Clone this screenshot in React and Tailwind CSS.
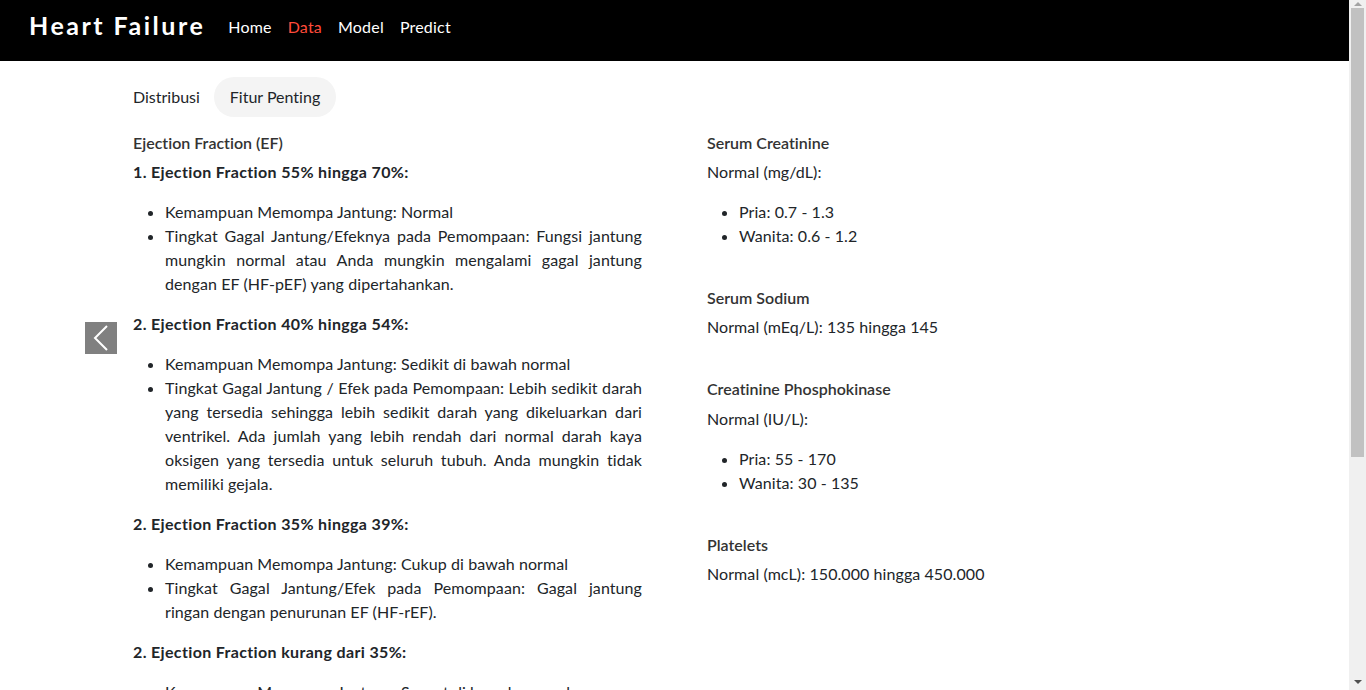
import React, { useState } from 'react';

const font = { fontFamily: 'Lato, "Noto Sans", sans-serif' };

const efSections = [
  {
    title: '1. Ejection Fraction 55% hingga 70%:',
    items: [
      'Kemampuan Memompa Jantung: Normal',
      'Tingkat Gagal Jantung/Efeknya pada Pemompaan: Fungsi jantung mungkin normal atau Anda mungkin mengalami gagal jantung dengan EF (HF-pEF) yang dipertahankan.',
    ],
  },
  {
    title: '2. Ejection Fraction 40% hingga 54%:',
    items: [
      'Kemampuan Memompa Jantung: Sedikit di bawah normal',
      'Tingkat Gagal Jantung / Efek pada Pemompaan: Lebih sedikit darah yang tersedia sehingga lebih sedikit darah yang dikeluarkan dari ventrikel. Ada jumlah yang lebih rendah dari normal darah kaya oksigen yang tersedia untuk seluruh tubuh. Anda mungkin tidak memiliki gejala.',
    ],
  },
  {
    title: '2. Ejection Fraction 35% hingga 39%:',
    items: [
      'Kemampuan Memompa Jantung: Cukup di bawah normal',
      'Tingkat Gagal Jantung/Efek pada Pemompaan: Gagal jantung ringan dengan penurunan EF (HF-rEF).',
    ],
  },
  {
    title: '2. Ejection Fraction kurang dari 35%:',
    items: [
      'Kemampuan Memompa Jantung: Sangat di bawah normal',
      'Tingkat Gagal Jantung/Efek pada Pemompaan: Gagal jantung sedang hingga berat dengan penurunan EF (HF-rEF).',
    ],
  },
];

const labs = [
  { title: 'Serum Creatinine', text: 'Normal (mg/dL):', items: ['Pria: 0.7 - 1.3', 'Wanita: 0.6 - 1.2'] },
  { title: 'Serum Sodium', text: 'Normal (mEq/L): 135 hingga 145' },
  { title: 'Creatinine Phosphokinase', text: 'Normal (IU/L):', items: ['Pria: 55 - 170', 'Wanita: 30 - 135'] },
  { title: 'Platelets', text: 'Normal (mcL): 150.000 hingga 450.000' },
];

const Navbar = () => (
  <nav className="h-[61px] bg-black flex items-center px-[29px] pb-[7px]">
    <span className="text-white text-[25px] font-bold tracking-[0.1em] mr-[15px] -mt-[3px]">Heart Failure</span>
    <ul className="flex items-center text-base tracking-[0.2px]">
      {['Home', 'Data', 'Model', 'Predict'].map((l) => (
        <li key={l}>
          <a href="#" className={`block px-2 ${l === 'Data' ? 'text-[#ff4b3a]' : 'text-white'}`}>{l}</a>
        </li>
      ))}
    </ul>
  </nav>
);

// fake classic scrollbar, as in the reference window
const Scrollbar = () => (
  <div className="fixed top-0 right-0 w-[17px] h-screen bg-[#f0f0f0] flex flex-col items-center">
    <div className="h-[8px] flex items-center justify-center">
      <div className="w-0 h-0 border-l-[4px] border-r-[4px] border-b-[4px] border-l-transparent border-r-transparent border-b-[#a3a3a3]" />
    </div>
    <div className="w-[13px] h-[449px] bg-[#c1c1c1]" />
    <div className="flex-1" />
    <div className="h-[17px] flex items-center justify-center">
      <div className="w-0 h-0 border-l-[4px] border-r-[4px] border-t-[4px] border-l-transparent border-r-transparent border-t-[#505050]" />
    </div>
  </div>
);

export default function App() {
  const [tab, setTab] = useState('Fitur Penting');

  return (
    <div className="min-h-screen bg-white text-[#212529] [font-variant-ligatures:none]" style={font}>
      <div className="mr-[17px]">
        <Navbar />

        <div className="relative pl-[133px] pr-[100px] pt-4 pb-10 tracking-[0.08px]">
          {/* carousel prev */}
          <button className="absolute left-[85px] top-[261px] w-8 h-8 bg-[#808080] flex items-center justify-center">
            <svg width="20" height="28" viewBox="0 0 20 28" fill="none" stroke="white" strokeWidth="2">
              <path d="M16 2 L4 14 L16 26" />
            </svg>
          </button>

          <div className="flex items-center mb-4 tracking-normal">
            {['Distribusi', 'Fitur Penting'].map((t, i) => (
              <button
                key={t}
                onClick={() => setTab(t)}
                className={`h-10 rounded-full text-base ${i === 0 ? 'pr-[14px]' : 'px-4'} ${tab === t && i === 1 ? 'bg-[#f4f4f4]' : ''}`}
              >
                {t}
              </button>
            ))}
          </div>

          <div className="flex gap-[65px]">
            <div className="w-[509px] shrink-0">
              <h6 className="text-base font-semibold leading-[1.2] mb-2 text-[#333] tracking-normal">Ejection Fraction (EF)</h6>
              {efSections.map((s) => (
                <div key={s.title}>
                  <p className="font-bold leading-6 mb-4 tracking-[0.35px]">{s.title}</p>
                  <ul className="list-disc pl-8 mb-4 leading-6 text-justify">
                    {s.items.map((it) => <li key={it}>{it}</li>)}
                  </ul>
                </div>
              ))}
            </div>

            <div className="w-[509px]">
              {labs.map((l) => (
                <div key={l.title} className="pb-6">
                  <h6 className="text-base font-semibold leading-[1.2] mb-2 text-[#333] tracking-normal">{l.title}</h6>
                  <p className="leading-6 mb-4">{l.text}</p>
                  {l.items && (
                    <ul className="list-disc pl-8 mb-4 leading-6">
                      {l.items.map((it) => <li key={it}>{it}</li>)}
                    </ul>
                  )}
                </div>
              ))}
            </div>
          </div>
        </div>
      </div>
      <Scrollbar />
    </div>
  );
}
